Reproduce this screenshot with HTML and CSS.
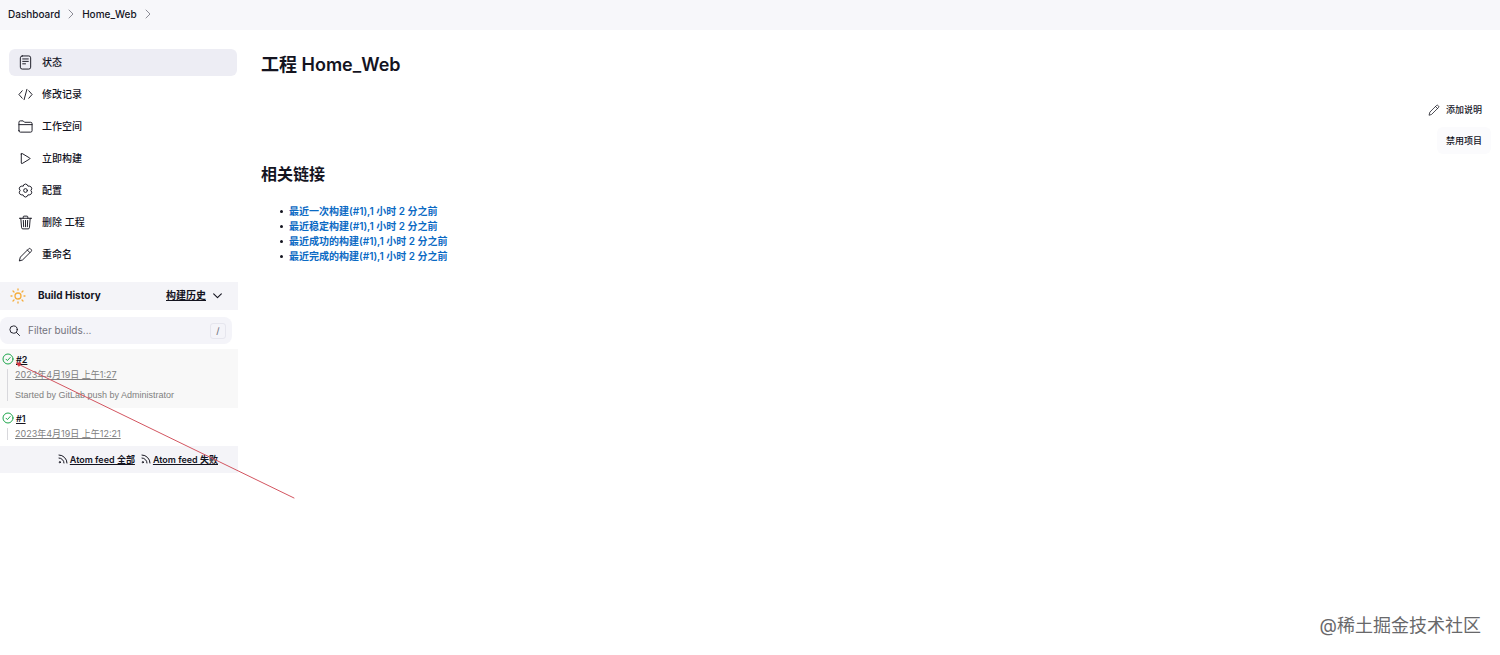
FILE: index.html
```html
<!DOCTYPE html>
<html lang="zh-CN">
<head>
    <meta charset="UTF-8">
    <meta name="viewport" content="width=device-width, initial-scale=1.0">
    <title>Home_Web [Jenkins]</title>
    <link rel="stylesheet" href="styles.css">
</head>
<body>
    <nav class="breadcrumbs" aria-label="Breadcrumb">
        <a href="#">Dashboard</a>
        <svg class="chevron" viewBox="0 0 8 10"><path d="M2 1l4 4-4 4"/></svg>
        <a href="#">Home_Web</a>
        <svg class="chevron" viewBox="0 0 8 10"><path d="M2 1l4 4-4 4"/></svg>
    </nav>

    <div class="page">
        <aside class="side-panel">
            <nav class="tasks">
                <a class="task active" href="#">
                    <svg class="icon" viewBox="0 0 16 16"><rect x="2.500" y="1" width="11" height="14" rx="2"/><path d="M5 4.200h6M5 6.800h6M5 9.400h3"/></svg>
                    <span>状态</span>
                </a>
                <a class="task" href="#">
                    <svg class="icon" viewBox="0 0 16 16"><path d="M4.500 4L1 8l3.500 4M11.500 4L15 8l-3.500 4M9.500 2.500l-3 11"/></svg>
                    <span>修改记录</span>
                </a>
                <a class="task" href="#">
                    <svg class="icon" viewBox="0 0 16 16"><path d="M1 12.500v-9a1.500 1.500 0 0 1 1.500-1.500h3l1.500 1.500h6.500a1.500 1.500 0 0 1 1.500 1.500v7.500a1.500 1.500 0 0 1-1.500 1.500h-11a1.500 1.500 0 0 1-1.500-1.500zM1 6h14"/></svg>
                    <span>工作空间</span>
                </a>
                <a class="task" href="#">
                    <svg class="icon" viewBox="0 0 16 16"><path d="M3.500 3.200v9.600c0 .6.500.8 1 .5l8-4.800c.5-.3.500-.7 0-1l-8-4.800c-.5-.3-1-.1-1 .5z"/></svg>
                    <span>立即构建</span>
                </a>
                <a class="task" href="#">
                    <svg class="icon" viewBox="0 0 16 16"><circle cx="8" cy="8" r="2"/><path d="M6.200 1.800Q8 .2 9.800 1.800L10.600 3.300L12.600 3.400Q14.800 4.100 14.700 6.200L13.700 8L14.700 9.800Q14.800 11.900 12.600 12.600L10.600 12.700L9.800 14.200Q8 15.800 6.200 14.200L5.400 12.700L3.400 12.600Q1.200 11.900 1.300 9.800L2.300 8L1.300 6.200Q1.200 4.100 3.400 3.400L5.400 3.300z"/></svg>
                    <span>配置</span>
                </a>
                <a class="task" href="#">
                    <svg class="icon" viewBox="0 0 16 16"><path d="M1.500 3.500h13M5.500 3.500V2.200q0-1 1-1h3q1 0 1 1v1.300M3 3.500l.8 10q.1 1.300 1.400 1.300h5.600q1.300 0 1.400-1.300l.8-10M5.700 5.800l.3 6.700M8 5.800v6.700M10.300 5.800L10 12.500"/></svg>
                    <span>删除 工程</span>
                </a>
                <a class="task" href="#">
                    <svg class="icon" viewBox="0 0 16 16"><path d="M1.500 14.500l1-3.700L11.300 2q1-1 2.100 0l.6.600q1 1.100 0 2.100L5.200 13.500zM10 3.300l2.700 2.700"/></svg>
                    <span>重命名</span>
                </a>
            </nav>

            <section class="history">
                <header class="history-header">
                    <svg class="sun" viewBox="0 0 16 16"><circle cx="8" cy="8" r="3"/><path d="M8 1v1M8 14v1M1 8h1M14 8h1M3 3l1 1M12 12l1 1M3 13l1-1M12 4l1-1"/></svg>
                    <h2>Build History</h2>
                    <a class="trend" href="#">构建历史</a>
                    <svg class="expand" viewBox="0 0 10 10"><path d="M1.500 3.500l3.500 3.500 3.500-3.500"/></svg>
                </header>

                <label class="search">
                    <svg class="search-icon" viewBox="0 0 12 12"><circle cx="5" cy="5" r="4"/><path d="M8 8l3.500 3.500"/></svg>
                    <input type="search" placeholder="Filter builds..." aria-label="Filter builds">
                    <kbd>/</kbd>
                </label>

                <div class="build highlighted">
                    <div class="build-name">
                        <svg class="success" viewBox="0 0 12 12"><circle cx="6" cy="6" r="5"/><path d="M4 6.200l1.400 1.400L8.200 4.500"/></svg>
                        <a href="#">#2</a>
                    </div>
                    <div class="build-details">
                        <a href="#">2023年4月19日 上午1:27</a>
                        <p>Started by GitLab push by Administrator</p>
                    </div>
                </div>
                <div class="build">
                    <div class="build-name">
                        <svg class="success" viewBox="0 0 12 12"><circle cx="6" cy="6" r="5"/><path d="M4 6.200l1.400 1.400L8.200 4.500"/></svg>
                        <a href="#">#1</a>
                    </div>
                    <div class="build-details">
                        <a href="#">2023年4月19日 上午12:21</a>
                    </div>
                </div>

                <footer class="feeds">
                    <a href="#">
                        <svg class="rss" viewBox="0 0 10 12"><path d="M1 1a8 8 0 0 1 8 8M1 4a5 5 0 0 1 5 5"/><circle cx="1.800" cy="8.200" r=".6"/></svg>
                        <span>Atom feed 全部</span>
                    </a>
                    <a href="#">
                        <svg class="rss" viewBox="0 0 10 12"><path d="M1 1a8 8 0 0 1 8 8M1 4a5 5 0 0 1 5 5"/><circle cx="1.800" cy="8.200" r=".6"/></svg>
                        <span>Atom feed 失败</span>
                    </a>
                </footer>
            </section>
        </aside>

        <main class="main-panel">
            <h1>工程 Home_Web</h1>
            <div class="actions">
                <a class="description" href="#">
                    <svg class="pencil" viewBox="0 0 16 16"><path d="M1.500 14.500l1-3.700L11.300 2q1-1 2.100 0l.6.600q1 1.100 0 2.100L5.200 13.500zM10 3.300l2.700 2.700"/></svg>
                    <span>添加说明</span>
                </a>
                <button class="disable" type="button">禁用项目</button>
            </div>
            <h2>相关链接</h2>
            <ul class="permalinks">
                <li><a href="#">最近一次构建(#1),1 小时 2 分之前</a></li>
                <li><a href="#">最近稳定构建(#1),1 小时 2 分之前</a></li>
                <li><a href="#">最近成功的构建(#1),1 小时 2 分之前</a></li>
                <li><a href="#">最近完成的构建(#1),1 小时 2 分之前</a></li>
            </ul>
        </main>
    </div>

    <svg class="arrow" viewBox="0 0 280 137"><path class="arrow-line" d="M3 2l276 134"/><path class="arrow-head" d="M2 1l4 0-2 3z"/></svg>
    <div class="watermark">@稀土掘金技术社区</div>
</body>
</html>
```

FILE: styles.css
```css
* {
    box-sizing: border-box;
}

body {
    position: relative;
    margin: 0;
    min-height: 100vh;
    background-color: #fff;
    color: #14141f;
    font-family: Inter, "Noto Sans CJK SC", sans-serif;
    font-size: 10px;
    font-weight: 500;
    line-height: 15px;
}

a {
    color: inherit;
    text-decoration: none;
}

h1, h2, p, ul {
    margin: 0;
}

svg {
    flex: none;
    fill: none;
    stroke: currentColor;
    stroke-linecap: round;
    stroke-linejoin: round;
}

.breadcrumbs {
    display: flex;
    align-items: center;
    gap: 7px;
    height: 30px;
    padding: 0 8px 2px;
    background-color: #f7f7fa;
}

.chevron {
    width: 8px;
    height: 10px;
    color: #8c8c96;
}

.page {
    display: flex;
}

.side-panel {
    flex: none;
    width: 238px;
    padding-top: 19px;
}

.tasks {
    display: flex;
    flex-direction: column;
    gap: 5px;
    padding: 0 1px 0 9px;
}

.task {
    display: flex;
    align-items: center;
    gap: 9px;
    height: 27px;
    padding: 0 9px;
    border-radius: 6px;
}

.task.active {
    background-color: #ededf4;
}

.icon {
    width: 15px;
    height: 15px;
}

.history {
    margin-top: 14px;
}

.history-header {
    display: flex;
    align-items: center;
    height: 28px;
    padding: 0 15px 1px 10px;
    background-color: #f4f4f8;
}

.history-header h2 {
    flex: 1;
    margin-left: 12px;
    font-size: 10px;
    font-weight: 700;
}

.sun {
    width: 16px;
    height: 16px;
    color: #f5ad3c;
    stroke-width: 1.3;
}

.trend {
    font-weight: 600;
    text-decoration: underline;
}

.expand {
    width: 11px;
    height: 11px;
    margin-left: 6px;
}

.search {
    display: flex;
    align-items: center;
    height: 27px;
    margin: 7px 6px 5px 0;
    padding: 0 6px 0 9px;
    border-radius: 8px;
    background-color: #f4f4f9;
}

.search-icon {
    width: 11px;
    height: 11px;
}

.search input {
    flex: 1;
    min-width: 0;
    margin: 0 8px;
    padding: 0;
    border: none;
    outline: none;
    background: none;
    color: inherit;
    font: inherit;
    font-weight: 400;
}

.search input::placeholder {
    color: #73737c;
}

.search kbd {
    width: 16px;
    border: 1px solid #e6e6ee;
    border-radius: 3px;
    color: #73737c;
    font-family: inherit;
    font-size: 9px;
    line-height: 14px;
    text-align: center;
}

.build {
    padding: 2px 2px 6px;
}

.build.highlighted {
    padding-bottom: 7px;
    background-color: #f8f8f8;
}

.build-name {
    display: flex;
    align-items: center;
    gap: 2px;
    height: 16px;
    font-size: 9px;
    font-weight: 600;
}

.build-name a {
    text-decoration: underline;
}

.success {
    width: 12px;
    height: 12px;
    color: #1ea64b;
}

.build-details {
    display: flex;
    flex-direction: column;
    align-items: flex-start;
    gap: 8px;
    margin: 2px 0 0 5px;
    padding-left: 7px;
    border-left: 1px solid #d8d8dc;
    color: #808080;
    font-size: 9px;
    font-weight: 400;
    line-height: 12px;
}

.build-details a {
    text-decoration: underline;
}

.build-details p {
    font-family: "Liberation Sans", Arial, sans-serif;
}

.feeds {
    display: flex;
    justify-content: flex-end;
    gap: 6px;
    height: 27px;
    padding: 0 20px;
    background-color: #f4f4f8;
    font-size: 9px;
    font-weight: 600;
}

.feeds a {
    display: flex;
    align-items: center;
    gap: 2px;
}

.feeds span {
    text-decoration: underline;
}

.rss {
    width: 10px;
    height: 12px;
}

.main-panel {
    flex: 1;
    padding: 23px 9px 0 23px;
}

h1 {
    font-size: 18px;
    font-weight: 600;
    line-height: 24px;
}

.actions {
    display: flex;
    flex-direction: column;
    align-items: flex-end;
    gap: 10px;
    margin-top: 25px;
    font-size: 9px;
}

.description {
    display: flex;
    align-items: center;
    gap: 6px;
    padding-right: 9px;
}

.pencil {
    width: 12px;
    height: 12px;
}

.disable {
    height: 27px;
    padding: 0 9px;
    border: none;
    border-radius: 6px;
    background-color: #fbfbfd;
    color: inherit;
    font: inherit;
}

.main-panel h2 {
    margin-top: 8px;
    font-size: 16px;
    font-weight: 600;
    line-height: 24px;
}

.permalinks {
    margin-top: 18px;
    padding-left: 19px;
    list-style: none;
}

.permalinks li {
    display: flex;
    align-items: center;
    gap: 6px;
}

.permalinks li::before {
    content: "";
    width: 3px;
    height: 3px;
    border-radius: 50%;
    background-color: #14141f;
}

.permalinks a {
    color: #0b6ac4;
    font-weight: 600;
}

.arrow {
    position: absolute;
    top: 362px;
    left: 15px;
    width: 280px;
    height: 137px;
    pointer-events: none;
}

.arrow-line {
    stroke: #d35560;
}

.arrow-head {
    fill: #d3303c;
    stroke: #d3303c;
}

.watermark {
    position: absolute;
    right: 19px;
    bottom: 17px;
    color: #68686a;
    font-size: 18px;
    font-weight: 400;
    line-height: 24px;
}
```
